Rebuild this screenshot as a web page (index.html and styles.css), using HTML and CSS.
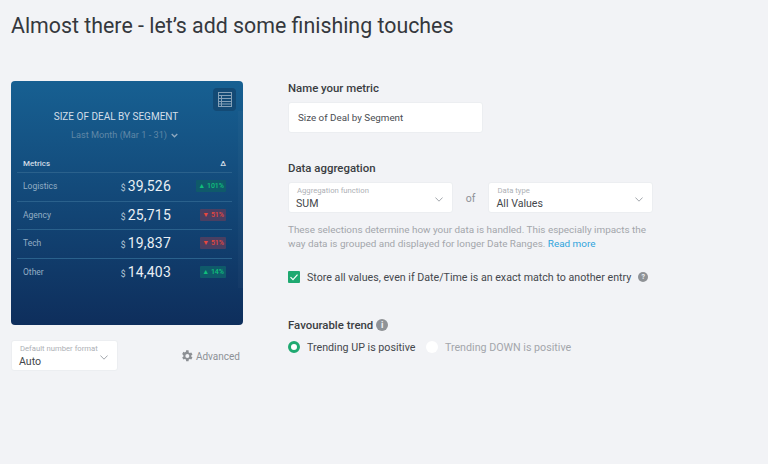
FILE: index.html
```html
<!DOCTYPE html>
<html lang="en">
<head>
<meta charset="utf-8">
<title>Finishing touches</title>
<link rel="stylesheet" href="styles.css">
</head>
<body>
<h1 class="title">Almost there - let’s add some finishing touches</h1>
<main class="columns">
  <section class="left">
    <div class="card">
      <div class="card-track"></div>
      <div class="card-tool">
        <svg width="14" height="15" viewBox="0 0 14 15" fill="none" stroke="#84a0b7" stroke-width="1"><rect x=".5" y=".5" width="13" height="14"/><path d="M.5 3.500h13M.5 6.500h13M.5 9.500h13M.5 12h13M3.500 3.500v11"/></svg>
      </div>
      <div class="card-title">SIZE OF DEAL BY SEGMENT</div>
      <div class="card-range">Last Month (Mar 1 - 31)
        <svg width="7" height="5" viewBox="0 0 7 5" fill="none" stroke="#8fa9bf" stroke-width="1.3"><path d="M.7 1l2.800 2.800L6.300 1"/></svg>
      </div>
      <div class="thead"><span>Metrics</span><span class="delta">Δ</span></div>
      <div class="row"><span class="name">Logistics</span><span class="val"><small>$</small>39,526</span><span class="cell"><span class="badge up">▲ 101%</span></span></div>
      <div class="row"><span class="name">Agency</span><span class="val"><small>$</small>25,715</span><span class="cell"><span class="badge down">▼ 51%</span></span></div>
      <div class="row"><span class="name">Tech</span><span class="val"><small>$</small>19,837</span><span class="cell"><span class="badge down">▼ 51%</span></span></div>
      <div class="row last"><span class="name">Other</span><span class="val"><small>$</small>14,403</span><span class="cell"><span class="badge up">▲ 14%</span></span></div>
    </div>
    <div class="under">
      <div class="select format">
        <div class="sel-label">Default number format</div>
        <div class="sel-value">Auto</div>
        <svg class="chev" width="8" height="5" viewBox="0 0 8 5" fill="none" stroke="#a3a7ad" stroke-width="1"><path d="M.4.500L4 4.200 7.600.500"/></svg>
      </div>
      <div class="advanced">
        <svg width="12" height="12" viewBox="2.500 1.500 19 21" fill="#8c8f94"><path d="M19.400 13a7.500 7.500 0 0 0 0-2l2.200-1.700-2.100-3.600-2.600 1a7.600 7.600 0 0 0-1.800-1L14.700 2h-4.200l-.4 2.700a7.600 7.600 0 0 0-1.800 1l-2.600-1-2.100 3.600L5.800 11a7.500 7.500 0 0 0 0 2l-2.200 1.700 2.100 3.600 2.600-1a7.600 7.600 0 0 0 1.800 1l.4 2.700h4.200l.4-2.700a7.600 7.600 0 0 0 1.800-1l2.600 1 2.100-3.600zM12.600 15.500a3.500 3.500 0 1 1 0-7 3.500 3.500 0 0 1 0 7z"/></svg>
        <span>Advanced</span>
      </div>
    </div>
  </section>
  <section class="right">
    <h2 class="label">Name your metric</h2>
    <div class="input">Size of Deal by Segment</div>
    <h2 class="label agg">Data aggregation</h2>
    <div class="agg-row">
      <div class="select wide">
        <div class="sel-label">Aggregation function</div>
        <div class="sel-value">SUM</div>
        <svg class="chev" width="8" height="5" viewBox="0 0 8 5" fill="none" stroke="#a3a7ad" stroke-width="1"><path d="M.4.500L4 4.200 7.600.500"/></svg>
      </div>
      <span class="of">of</span>
      <div class="select wide">
        <div class="sel-label">Data type</div>
        <div class="sel-value">All Values</div>
        <svg class="chev" width="8" height="5" viewBox="0 0 8 5" fill="none" stroke="#a3a7ad" stroke-width="1"><path d="M.4.500L4 4.200 7.600.500"/></svg>
      </div>
    </div>
    <p class="help">These selections determine how your data is handled. This especially impacts the way data is grouped and displayed for longer Date Ranges. <a class="link" href="#">Read more</a></p>
    <div class="check-row">
      <span class="check"><svg width="12" height="12" viewBox="0 0 12 12" fill="none" stroke="#fff" stroke-width="1.200"><path d="M2.500 6.200l2.500 2.500 4.500-5"/></svg></span>
      <span>Store all values, even if Date/Time is an exact match to another entry</span>
      <span class="hint">?</span>
    </div>
    <h2 class="label trend">Favourable trend <span class="info">i</span></h2>
    <div class="radio-row">
      <span class="radio on"></span><span>Trending UP is positive</span>
      <span class="radio"></span><span class="muted">Trending DOWN is positive</span>
    </div>
  </section>
</main>
</body>
</html>
```
FILE: styles.css
```css
* { box-sizing: border-box; }
html, body { margin: 0; height: 100%; }
body {
  background: #f2f3f6;
  font-family: Roboto, "Liberation Sans", sans-serif;
  color: #3c3f44;
  overflow: hidden;
}
.title {
  margin: 0;
  padding: 12px 0 0 11px;
  font-size: 21.350px;
  line-height: 28px;
  font-weight: 400;
  color: #35383d;
}
.columns {
  display: flex;
  gap: 45px;
  padding: 41px 0 0 11px;
}
.left { width: 232px; }
.card {
  position: relative;
  height: 244px;
  padding: 29px 11px 0 6px;
  border-radius: 4px;
  background: linear-gradient(#176092, #0e2e5c);
  color: #fff;
}
.card-track {
  position: absolute;
  top: 30px;
  right: 0;
  bottom: 37px;
  width: 5px;
  background: rgba(255, 255, 255, .025);
}
.card-tool {
  position: absolute;
  top: 7px;
  right: 7px;
  width: 23px;
  height: 23px;
  display: flex;
  align-items: center;
  justify-content: center;
  border-radius: 4px;
  background: #134a75;
}
.card-title {
  text-align: center;
  font-size: 10px;
  line-height: 14px;
  color: #d3dfe9;
  padding-right: 17px;
}
.card-range {
  display: flex;
  align-items: center;
  justify-content: center;
  gap: 4px;
  margin-top: 4px;
  font-size: 9.200px;
  line-height: 14px;
  color: #5f87a6;
}
.thead {
  display: flex;
  justify-content: space-between;
  align-items: center;
  height: 17px;
  margin-top: 13px;
  padding: 0 6px;
  font-size: 8px;
  font-weight: 500;
  color: #d0dbe5;
}
.delta { font-size: 8px; }
.row {
  display: grid;
  grid-template-columns: 1fr auto 55px;
  align-items: center;
  height: 28.700px;
  padding: 0 6px 2px;
  border-top: 1px solid #2a618c;
}
.name { font-size: 8.500px; color: #93aec5; }
.val { font-size: 14px; color: #e9eff4; letter-spacing: .2px; }
.val small { font-size: 8.500px; margin-right: 2px; color: #b6c8d7; }
.cell { display: flex; justify-content: flex-end; }
.badge {
  display: inline-block;
  padding: 0 2px;
  height: 12px;
  line-height: 12px;
  font-size: 7px;
  font-weight: 500;
  border-radius: 1px;
}
.badge.up { background: #0f5a6a; color: #0fc07a; }
.badge.down { background: #4a3f62; color: #e8483f; }
.under {
  display: flex;
  justify-content: space-between;
  align-items: center;
  margin-top: 15px;
}
.select {
  position: relative;
  height: 31px;
  padding: 3px 7px 0;
  background: #fff;
  border: 1px solid #eceef1;
  border-radius: 3px;
}
.format { width: 107px; }
.wide { width: 165px; }
.sel-label { font-size: 7.700px; line-height: 9px; color: #adb0b5; padding-left: 1px; }
.sel-value { font-size: 10.600px; line-height: 14px; margin-top: 2px; color: #43464b; }
.chev { position: absolute; right: 9px; top: 14px; }
.advanced {
  display: flex;
  align-items: center;
  gap: 3px;
  padding-right: 3px;
  padding-top: 1px;
  font-size: 10px;
  color: #8d9196;
}
.right { width: 365px; }
.label {
  margin: 0;
  font-size: 11.400px;
  line-height: 14px;
  font-weight: 500;
  color: #3a3d42;
}
.input {
  width: 195px;
  height: 31px;
  margin-top: 7px;
  padding-left: 9px;
  display: flex;
  align-items: center;
  background: #fff;
  border: 1px solid #eceef1;
  border-radius: 3px;
  font-size: 9.800px;
  color: #4a4d52;
}
.agg { margin-top: 28px; }
.agg-row {
  display: flex;
  align-items: center;
  margin-top: 7px;
}
.of {
  width: 36px;
  padding-top: 1px;
  text-align: center;
  font-size: 10.500px;
  color: #8d9196;
}
.help {
  width: 365px;
  margin: 10px 0 0;
  font-size: 9.920px;
  line-height: 14px;
  color: #a3a6ab;
}
.link { color: #2fa4dc; text-decoration: none; }
.check-row {
  display: flex;
  align-items: center;
  gap: 7px;
  margin-top: 19px;
  height: 14px;
  font-size: 10.660px;
  color: #45484d;
}
.check {
  width: 12px;
  height: 12px;
  display: flex;
  border-radius: 1px;
  background: #1fa971;
}
.hint, .info {
  display: inline-flex;
  align-items: center;
  justify-content: center;
  width: 10px;
  height: 10px;
  border-radius: 50%;
  background: #8f9296;
  color: #f2f3f6;
  font-size: 7px;
  font-weight: 700;
}
.trend { margin-top: 34px; display: flex; align-items: center; gap: 3px; font-size: 11.400px; }
.info { width: 12px; height: 12px; font-size: 9px; }
.radio-row {
  display: flex;
  align-items: center;
  gap: 7px;
  margin-top: 8px;
  height: 14px;
  font-size: 10.700px;
  color: #45484d;
}
.radio {
  width: 12px;
  height: 12px;
  border-radius: 50%;
  background: #fff;
}
.radio.on {
  background: #fff;
  border: 3.500px solid #1fa971;
}
.radio:not(.on) { margin-left: 3.500px; }
.muted { color: #a3a6ab; }
```
